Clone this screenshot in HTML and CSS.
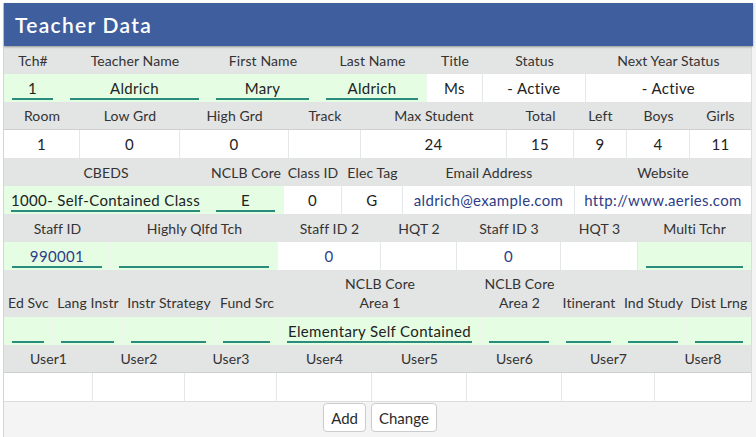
FILE: index.html
```html
<!DOCTYPE html>
<html lang="en">
<head>
<meta charset="utf-8">
<title>Teacher Data</title>
<link rel="stylesheet" href="styles.css">
</head>
<body>
<div class="page">
  <div class="panel">
    <div class="title-bar"><h1 class="title">Teacher Data</h1></div>
    <div class="data">
      <div class="sec sec1">
        <div class="lbl">Tch#</div><div class="lbl">Teacher Name</div><div class="lbl">First Name</div><div class="lbl">Last Name</div><div class="lbl">Title</div><div class="lbl">Status</div><div class="lbl">Next Year Status</div>
        <div class="val edit"><span class="inp">1</span></div>
        <div class="val edit"><span class="inp">Aldrich</span></div>
        <div class="val edit"><span class="inp">Mary</span></div>
        <div class="val edit"><span class="inp">Aldrich</span></div>
        <div class="val">Ms</div>
        <div class="val">- Active</div>
        <div class="val last">- Active</div>
      </div>
      <div class="sec sec2 ruled">
        <div class="lbl">Room</div><div class="lbl">Low Grd</div><div class="lbl">High Grd</div><div class="lbl">Track</div><div class="lbl">Max Student</div><div class="lbl">Total</div><div class="lbl">Left</div><div class="lbl">Boys</div><div class="lbl">Girls</div>
        <div class="val">1</div><div class="val">0</div><div class="val">0</div><div class="val"></div><div class="val">24</div><div class="val">15</div><div class="val">9</div><div class="val">4</div><div class="val last">11</div>
      </div>
      <div class="sec sec3">
        <div class="lbl">CBEDS</div><div class="lbl">NCLB Core</div><div class="lbl">Class ID</div><div class="lbl">Elec Tag</div><div class="lbl">Email Address</div><div class="lbl">Website</div>
        <div class="val edit"><span class="inp">1000- Self-Contained Class</span></div>
        <div class="val edit"><span class="inp">E</span></div>
        <div class="val">0</div>
        <div class="val">G</div>
        <div class="val link">aldrich@example.com</div>
        <div class="val link last">http://www.aeries.com</div>
      </div>
      <div class="sec sec4">
        <div class="lbl">Staff ID</div><div class="lbl">Highly Qlfd Tch</div><div class="lbl">Staff ID 2</div><div class="lbl">HQT 2</div><div class="lbl">Staff ID 3</div><div class="lbl">HQT 3</div><div class="lbl">Multi Tchr</div>
        <div class="val edit"><span class="inp link">990001</span></div>
        <div class="val edit"><span class="inp"></span></div>
        <div class="val link">0</div>
        <div class="val"></div>
        <div class="val link">0</div>
        <div class="val"></div>
        <div class="val edit last"><span class="inp"></span></div>
      </div>
      <div class="sec sec5">
        <div class="lbl tall">Ed Svc</div><div class="lbl tall">Lang Instr</div><div class="lbl tall">Instr Strategy</div><div class="lbl tall">Fund Src</div><div class="lbl tall">NCLB Core<br>Area 1</div><div class="lbl tall">NCLB Core<br>Area 2</div><div class="lbl tall">Itinerant</div><div class="lbl tall">Ind Study</div><div class="lbl tall">Dist Lrng</div>
        <div class="val edit"><span class="inp"></span></div>
        <div class="val edit"><span class="inp"></span></div>
        <div class="val edit"><span class="inp"></span></div>
        <div class="val edit"><span class="inp"></span></div>
        <div class="val edit"><span class="inp">Elementary Self Contained</span></div>
        <div class="val edit"><span class="inp"></span></div>
        <div class="val edit"><span class="inp"></span></div>
        <div class="val edit"><span class="inp"></span></div>
        <div class="val edit last"><span class="inp"></span></div>
      </div>
      <div class="sec sec6 ruled">
        <div class="lbl">User1</div><div class="lbl">User2</div><div class="lbl">User3</div><div class="lbl">User4</div><div class="lbl">User5</div><div class="lbl">User6</div><div class="lbl">User7</div><div class="lbl">User8</div>
        <div class="val"></div><div class="val"></div><div class="val"></div><div class="val"></div><div class="val"></div><div class="val"></div><div class="val"></div><div class="val last"></div>
      </div>
    </div>
    <div class="actions">
      <button class="btn" type="button">Add</button>
      <button class="btn" type="button">Change</button>
    </div>
  </div>
</div>
</body>
</html>
```

FILE: styles.css
```css
*, *::before, *::after {
  box-sizing: border-box;
}
html, body {
  margin: 0;
  padding: 0;
  background: #ffffff;
}
body {
  font-family: "Lato", "DejaVu Sans", sans-serif;
  color: #2b2b2b;
}
.page {
  padding: 3px 0 0 3px;
  height: 437px;
  overflow: hidden;
}
.panel {
  background: #f4f4f4;
  border-left: 1px solid #d4d4d4;
  height: 100%;
}
.title-bar {
  background: #3f5e9e;
  height: 43px;
  width: 749px;
  display: flex;
  align-items: center;
  box-shadow: 0 1px 2px rgba(0, 0, 0, 0.35);
  position: relative;
  z-index: 1;
}
.title {
  margin: 0 0 0 11px;
  font-size: 21px;
  font-weight: 600;
  color: #ffffff;
  letter-spacing: 1.3px;
}
.data {
  width: 748px;
  border-right: 1px solid #dcdcdc;
  border-bottom: 1px solid #dcdcdc;
}
.sec {
  display: grid;
  grid-template-rows: 28px 28px;
}
.sec1 { grid-template-columns: 58px 146px 110px 109px 56px 103px 165px; }
.sec2 { grid-template-columns: 76px 100px 109px 72px 146px 67px 53px 63px 61px; }
.sec3 { grid-template-columns: 204px 76px 58px 61px 172px 176px; }
.sec4 { grid-template-columns: 107px 167px 103px 76px 104px 77px 113px; }
.sec5 { grid-template-columns: 49px 70px 92px 64px 202px 77px 62px 67px 64px; grid-template-rows: 47px 28px; }
.sec6 { grid-template-columns: 89px 92px 92px 95px 95px 95px 93px 96px; }

.lbl {
  background: #e3e4e4;
  font-size: 14px;
  color: #333333;
  display: flex;
  align-items: center;
  justify-content: center;
  text-align: center;
  white-space: nowrap;
  line-height: 19px;
  letter-spacing: 0.1px;
}
.lbl.tall {
  align-items: flex-end;
  padding-bottom: 5px;
}
.ruled .lbl {
  border-bottom: 1px solid #cfcfcf;
}
.val {
  background: #ffffff;
  border-right: 1px solid #e5e8ea;
  font-size: 15px;
  letter-spacing: 0.35px;
  color: #222222;
  display: flex;
  align-items: center;
  justify-content: center;
  white-space: nowrap;
  overflow: hidden;
}
.val.last { border-right: none; }
.val.edit {
  background: #e4fde3;
  border-right-color: #eef6ee;
  align-items: flex-end;
  padding: 0 8px 2px;
}
.inp {
  flex: 1;
  display: block;
  text-align: center;
  border-bottom: 2px solid #2a8c7b;
  height: 22px;
  line-height: 21px;
}
.link { color: #2e3d86; }

.actions {
  display: flex;
  justify-content: center;
  gap: 5px;
  padding-top: 1px;
}
.btn {
  font-family: "Lato", "DejaVu Sans", sans-serif;
  font-size: 15px;
  color: #2b2b2b;
  background: #ffffff;
  border: 1px solid #cccccc;
  border-radius: 4px;
  height: 29px;
  padding: 0 7px;
}
```
